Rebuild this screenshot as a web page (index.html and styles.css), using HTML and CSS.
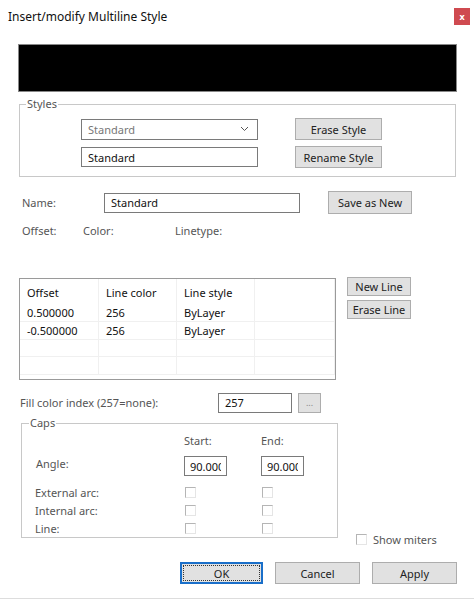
FILE: index.html
```html
<!DOCTYPE html>
<html lang="en">
  <head>
    <meta charset="UTF-8" />
    <meta name="viewport" content="width=device-width, initial-scale=1.0" />
    <title>Insert/modify Multiline Style</title>
    <link rel="stylesheet" href="styles.css">
  </head>
  <body>
    <div class="dialog">
      <div class="titlebar">
        <span class="title">Insert/modify Multiline Style</span>
        <button class="close-btn">x</button>
      </div>

      <div class="preview"></div>

      <fieldset class="group styles-group">
        <legend>Styles</legend>
        <div class="styles-grid">
          <div class="combo">
            <span>Standard</span>
            <svg width="9" height="6" viewBox="0 0 9 6"><path d="M1 1 L4.5 4.5 L8 1" fill="none" stroke="#555" stroke-width="1" /></svg>
          </div>
          <button class="btn style-btn">Erase Style</button>
          <input class="field style-name" type="text" value="Standard" />
          <button class="btn style-btn">Rename Style</button>
        </div>
      </fieldset>

      <div class="name-row">
        <label class="label name-label">Name:</label>
        <input class="field name-input" type="text" value="Standard" />
        <button class="btn save-btn">Save as New</button>
      </div>

      <div class="info-row">
        <span class="label info-offset">Offset:</span>
        <span class="label info-color">Color:</span>
        <span class="label">Linetype:</span>
      </div>

      <div class="lines-row">
        <div class="lines-table">
          <div class="cell head">Offset</div>
          <div class="cell head">Line color</div>
          <div class="cell head">Line style</div>
          <div class="cell head"></div>

          <div class="cell">0.500000</div>
          <div class="cell">256</div>
          <div class="cell">ByLayer</div>
          <div class="cell"></div>

          <div class="cell">-0.500000</div>
          <div class="cell">256</div>
          <div class="cell">ByLayer</div>
          <div class="cell"></div>

          <div class="cell"></div>
          <div class="cell"></div>
          <div class="cell"></div>
          <div class="cell"></div>

          <div class="cell"></div>
          <div class="cell"></div>
          <div class="cell"></div>
          <div class="cell"></div>
        </div>
        <div class="line-btns">
          <button class="btn line-btn">New Line</button>
          <button class="btn line-btn">Erase Line</button>
        </div>
      </div>

      <div class="fill-row">
        <label class="label fill-label">Fill color index (257=none):</label>
        <input class="field fill-input" type="text" value="257" />
        <button class="btn dots-btn">...</button>
      </div>

      <div class="caps-row">
        <fieldset class="group caps-group">
          <legend>Caps</legend>
          <div class="caps-grid">
            <span></span>
            <span class="label">Start:</span>
            <span class="label">End:</span>

            <span class="label angle-label">Angle:</span>
            <input class="field angle-input" type="text" value="90.0000" />
            <input class="field angle-input" type="text" value="90.0000" />

            <span class="label">External arc:</span>
            <span class="check"></span>
            <span class="check"></span>

            <span class="label">Internal arc:</span>
            <span class="check"></span>
            <span class="check"></span>

            <span class="label">Line:</span>
            <span class="check"></span>
            <span class="check"></span>
          </div>
        </fieldset>
        <div class="miters">
          <span class="check"></span>
          <span class="label">Show miters</span>
        </div>
      </div>

      <div class="footer">
        <button class="btn footer-btn ok-btn">OK</button>
        <button class="btn footer-btn">Cancel</button>
        <button class="btn footer-btn">Apply</button>
      </div>
    </div>
  </body>
</html>
```
FILE: styles.css
```css
* {
  margin: 0;
  padding: 0;
  box-sizing: border-box;
}

body {
  background-color: #fff;
  font-family: "Noto Sans", "Open Sans", sans-serif;
  font-size: 11px;
  color: #222;
}

.dialog {
  width: 474px;
  height: 599px;
  border-bottom: 1px solid #ddd;
}

.titlebar {
  height: 32px;
  display: flex;
  justify-content: space-between;
  align-items: center;
  padding: 0 4px 0 8px;
}

.title {
  font-size: 12px;
  color: #111;
}

.close-btn {
  width: 16px;
  height: 17px;
  border: none;
  background-color: #cf4a50;
  color: #fff;
  font-family: inherit;
  font-size: 9px;
  font-weight: bold;
}

.preview {
  margin: 12px 17px 0 18px;
  height: 48px;
  background-color: #000;
  border: 1px solid #888;
}

.label {
  color: #555;
}

.btn {
  background-color: #e1e1e1;
  border: 1px solid #adadad;
  font-family: inherit;
  font-size: 11px;
  color: #222;
}

.field {
  height: 20px;
  border: 1px solid #7a7a7a;
  font-family: inherit;
  font-size: 11px;
  color: #111;
  padding: 0 6px;
  outline: none;
}

.group {
  border: 1px solid #c8c8c8;
}

.group legend {
  margin-left: 2px;
  padding: 0 1px;
  line-height: 14px;
  color: #555;
}

.styles-group {
  margin: 5px 0 0 19px;
  width: 437px;
  padding: 7px 0 8px 4px;
}

.styles-grid {
  margin-left: 57px;
  display: grid;
  grid-template-columns: 177px 87px;
  column-gap: 37px;
  row-gap: 6px;
  align-items: center;
}

.combo {
  height: 21px;
  border: 1px solid #7a7a7a;
  display: flex;
  justify-content: space-between;
  align-items: center;
  padding: 0 8px 0 6px;
  color: #777;
}

.style-btn {
  height: 22px;
}

.name-row {
  margin-top: 14px;
  display: flex;
  align-items: center;
  height: 23px;
  padding-left: 22px;
}

.name-label {
  width: 82px;
}

.name-input {
  width: 196px;
}

.save-btn {
  margin-left: 28px;
  width: 84px;
  height: 23px;
}

.info-row {
  margin-top: 9px;
  height: 14px;
  display: flex;
  align-items: center;
  padding-left: 22px;
}

.info-offset {
  width: 61px;
}

.info-color {
  width: 92px;
}

.lines-row {
  margin-top: 41px;
  display: flex;
  align-items: flex-start;
  padding-left: 19px;
}

.lines-table {
  width: 317px;
  height: 102px;
  border: 1px solid #9a9a9a;
  display: grid;
  grid-template-columns: 79px 78px 78px 1fr;
  grid-template-rows: 24px 19px 18px 17px 18px;
  align-content: start;
}

.cell {
  border-right: 1px solid #f0f0f0;
  border-bottom: 1px solid #f0f0f0;
  padding-left: 7px;
  display: flex;
  align-items: center;
  color: #111;
}

.cell.head {
  border-bottom: none;
  padding-top: 3px;
}

.line-btns {
  margin-left: 11px;
  display: flex;
  flex-direction: column;
  gap: 4px;
  margin-top: -1px;
}

.line-btn {
  width: 64px;
  height: 19px;
}

.fill-row {
  margin-top: 12px;
  display: flex;
  align-items: center;
  height: 21px;
  padding-left: 20px;
}

.fill-label {
  width: 198px;
}

.fill-input {
  width: 74px;
}

.dots-btn {
  margin-left: 6px;
  width: 23px;
  height: 20px;
  color: #888;
  font-size: 9px;
}

.caps-row {
  display: flex;
  align-items: flex-end;
  padding-left: 21px;
}

.caps-group {
  margin-top: 3px;
  width: 317px;
  padding: 1px 0 0 5px;
}

.caps-grid {
  margin-left: 8px;
  display: grid;
  grid-template-columns: 149px 77px 40px;
  grid-template-rows: 18px 34px 18px 18px 18px;
  align-items: center;
}

.angle-label {
  padding-left: 1px;
  margin-top: -6px;
}

.angle-input {
  width: 43px;
  padding: 0 5px;
  overflow: hidden;
}

.check {
  width: 11px;
  height: 11px;
  border: 1px solid #b5b5b5;
  border-right-color: #e5e5e5;
  border-bottom-color: #e5e5e5;
  margin-left: 1px;
}

.miters {
  margin-left: 17px;
  margin-bottom: -9px;
  display: flex;
  align-items: center;
  gap: 6px;
}

.footer {
  margin-top: 24px;
  display: flex;
  justify-content: flex-end;
  gap: 12px;
  padding-right: 17px;
}

.footer-btn {
  width: 85px;
  height: 22px;
}

.ok-btn {
  width: 83px;
  border: 2px solid #1a6fc9;
  outline: 1px dotted #333;
  outline-offset: -4px;
}
```
